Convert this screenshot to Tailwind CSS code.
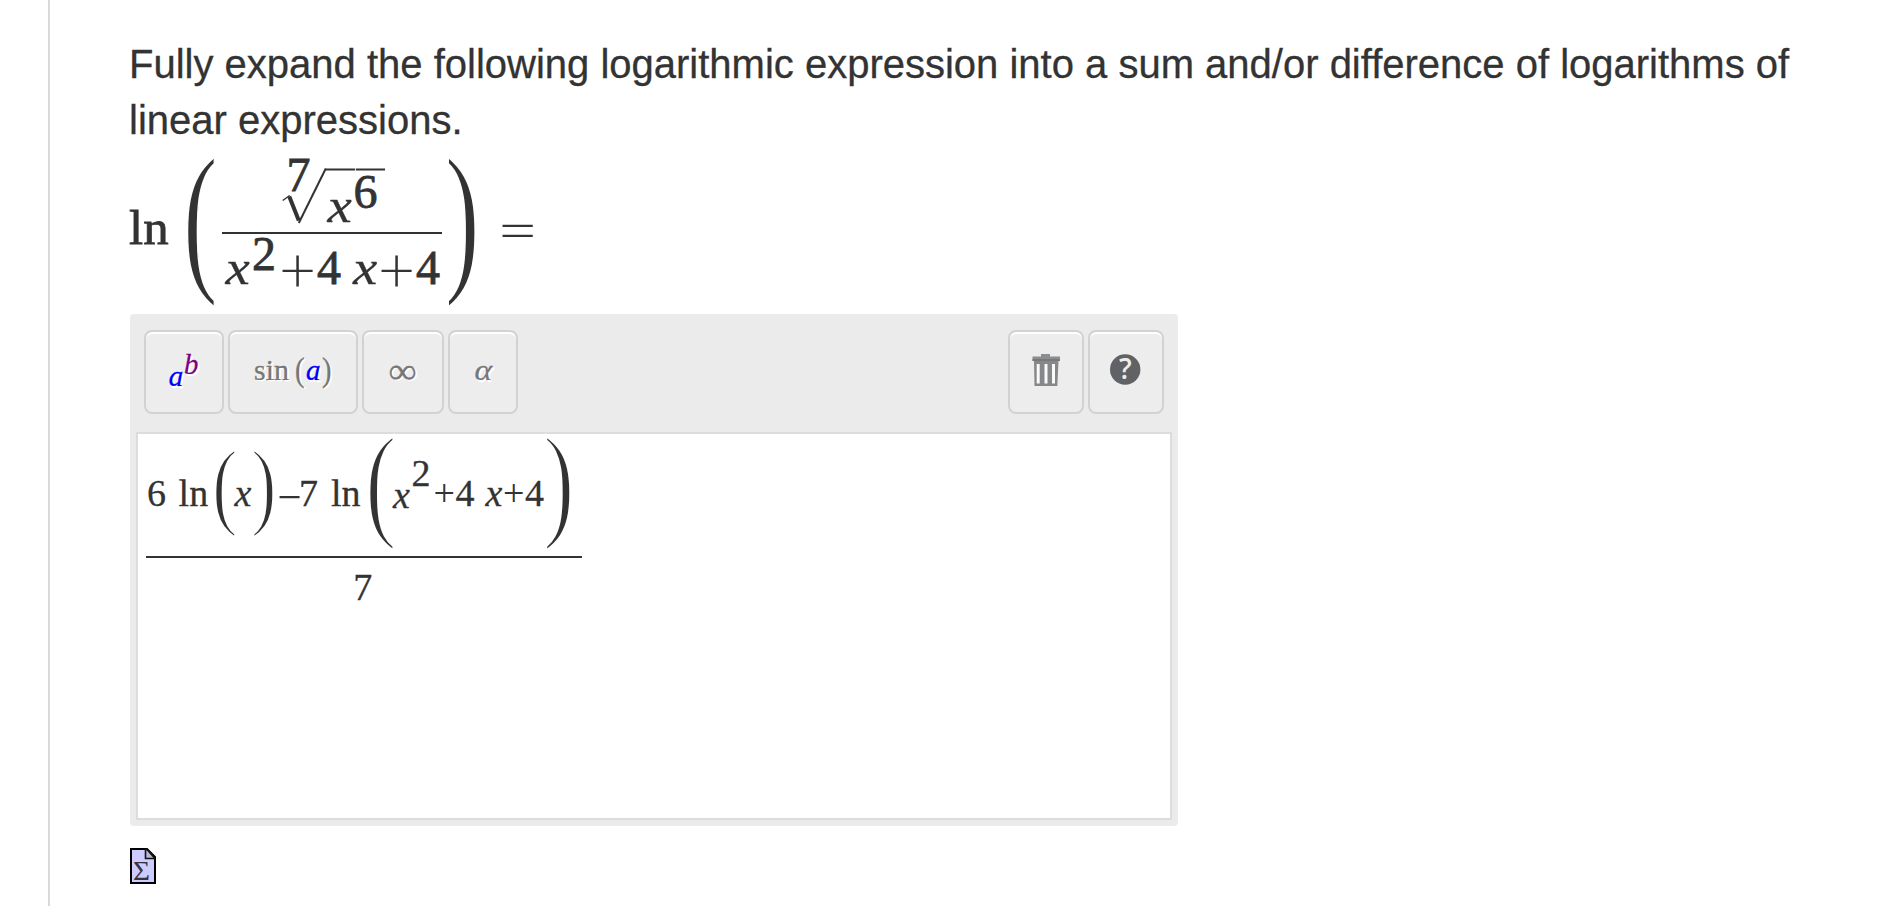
<!DOCTYPE html>
<html lang="en">
<head>
    <meta charset="UTF-8">
    <meta name="viewport" content="width=device-width, initial-scale=1.0">
    <title>Expand the Logarithm</title>
    <script src="https://cdn.jsdelivr.net/npm/@tailwindcss/browser@4"></script>
</head>
<body class="flex h-screen overflow-hidden bg-white font-['Liberation_Sans',sans-serif] text-[#333]">
    <aside class="w-[50px] shrink-0 border-r-2 border-[#d9d9d9]"></aside>
    <main class="flex flex-1 flex-col items-start pl-20 pt-9">
        <p class="-ml-px whitespace-nowrap text-[40px] leading-14 [-webkit-text-stroke:0.3px_#333]">Fully expand the following logarithmic expression into a sum and/or difference of logarithms of<br>linear expressions.</p>

        <!-- Question formula -->
        <svg class="h-[166px] w-[420px] overflow-visible font-['Liberation_Serif',serif]" viewBox="130 148 420 166" fill="#333" font-size="48">
            <g font-size="100" stroke="#fff" stroke-width="1.2">
                <text transform="translate(183 271.5) scale(1.04 1.65)">(</text>
                <text transform="translate(445 271.5) scale(1.04 1.65)">)</text>
            </g>
            <g stroke="#333" stroke-width="0.8">
                <text transform="translate(129 244) scale(1.06 1)">ln</text>
                <text x="286.5" y="190.5">7</text>
                <text x="353.5" y="208">6</text>
                <text x="252" y="270">2</text>
                <text x="317" y="284">4</text>
                <text x="416" y="284">4</text>
            </g>
            <g stroke="#333" stroke-width="0.3" font-style="italic">
                <text transform="translate(327.5 221.7) scale(1.14 1)">x</text>
                <text transform="translate(225.5 284) scale(1.14 1)">x</text>
                <text transform="translate(353 284) scale(1.14 1)">x</text>
            </g>
            <g font-family="Lato" font-weight="300" font-size="64">
                <text x="279" y="292">+</text>
                <text x="378" y="292">+</text>
                <text transform="translate(496.5 251.5) scale(1.14 1)">=</text>
            </g>
            <g fill="none" stroke="#333">
                <path d="M282.7 200.5l7-5" stroke-width="1.5"/>
                <path d="M289.3 196.5l9.5 24" stroke-width="4"/>
                <path d="M298.8 223l27-54.5" stroke-width="2"/>
                <path d="M325.5 169.5h29.7M356 169.5h29" stroke-width="2"/>
                <path d="M222 233h220" stroke-width="2"/>
            </g>
        </svg>

        <!-- Equation editor -->
        <section class="flex h-[512px] w-[1048px] flex-col rounded bg-[#ebebeb] px-1.5 pb-1.5">
            <div class="flex h-[118px] items-start justify-between px-2 pt-4 font-['Liberation_Serif',serif]">
                <div class="flex gap-1">
                    <button class="h-[84px] w-20 rounded-lg border-2 border-[#d2d2d2] bg-[#ededed] shadow-[inset_0_2px_0_#fff]">
                        <svg class="h-20 w-19 [paint-order:stroke] [text-shadow:1.5px_1.5px_0_#fff]" viewBox="146 332 76 80" font-size="29" font-style="italic" stroke-width="0.4">
                            <text x="168.7" y="386" fill="#00f" stroke="#00f">a</text>
                            <text x="184" y="374" fill="#800080" stroke="#800080">b</text>
                        </svg>
                    </button>
                    <button class="h-[84px] w-[130px] rounded-lg border-2 border-[#d2d2d2] bg-[#ededed] shadow-[inset_0_2px_0_#fff]">
                        <svg class="h-20 w-[126px] [paint-order:stroke] [text-shadow:1.5px_1.5px_0_#fff]" viewBox="230 332 126 80" font-size="29" fill="#777" stroke="#777" stroke-width="0.4">
                            <text transform="translate(254 380) scale(1.04 1)">sin</text>
                            <text transform="translate(295 380.5) scale(1 1.13)">(</text>
                            <text x="306" y="380" fill="#00f" stroke="#00f" font-style="italic">a</text>
                            <text transform="translate(322 380.5) scale(1 1.13)">)</text>
                        </svg>
                    </button>
                    <button class="h-[84px] w-[82px] rounded-lg border-2 border-[#d2d2d2] bg-[#ededed] shadow-[inset_0_2px_0_#fff]">
                        <svg class="h-20 w-[78px] [paint-order:stroke] [text-shadow:1.5px_1.5px_0_#fff]" viewBox="364 332 78 80" font-size="38" fill="#777" stroke="#777" stroke-width="0.5">
                            <text transform="translate(388.5 382.5) scale(1.04 .95)">∞</text>
                        </svg>
                    </button>
                    <button class="h-[84px] w-[70px] rounded-lg border-2 border-[#d2d2d2] bg-[#ededed] shadow-[inset_0_2px_0_#fff]">
                        <svg class="h-20 w-[66px] [paint-order:stroke] [text-shadow:1.5px_1.5px_0_#fff]" viewBox="450 332 66 80" font-size="30" font-style="italic" fill="#777" stroke="#777" stroke-width="0.3">
                            <text transform="translate(474.5 380.3) scale(1.12 1)">α</text>
                        </svg>
                    </button>
                </div>
                <div class="flex gap-1">
                    <button class="h-[84px] w-[76px] rounded-lg border-2 border-[#d2d2d2] bg-[#ededed] shadow-[inset_0_2px_0_#fff]">
                        <svg class="h-20 w-18" viewBox="1010 332 72 80">
                            <path fill="#8b8d8f" d="M1041 354h9v2.5h-9zM1032.5 356.5h27.5v4.5h-27.5z"/>
                            <path fill="#77797b" d="M1032.5 359h27.5v2h-27.5z"/>
                            <path fill="#85878a" d="M1034 361h24.5l-1.2 25h-22.8z"/>
                            <path stroke="#fafafa" stroke-width="3" d="M1038.2 364v19.5M1046 364v19.5M1053.5 364v19.5"/>
                        </svg>
                    </button>
                    <button class="h-[84px] w-[76px] rounded-lg border-2 border-[#d2d2d2] bg-[#ededed] shadow-[inset_0_2px_0_#fff]">
                        <svg class="h-20 w-18" viewBox="1090 332 72 80">
                            <circle cx="1125.2" cy="369.5" r="15.2" fill="#606266"/>
                            <text x="1125.4" y="379" text-anchor="middle" font-family="Open Sans" font-weight="600" font-size="28" fill="#ededed">?</text>
                        </svg>
                    </button>
                </div>
            </div>
            <div class="flex-1 border-2 border-[#dcdcdc] bg-white">
                <svg class="h-[190px] w-[470px] overflow-visible font-['Liberation_Serif',serif]" viewBox="138 434 470 190" font-size="38" fill="#333">
                    <g font-size="100" stroke="#fff" stroke-width="2.4">
                        <text transform="translate(212 516.7) scale(.77 .965)">(</text>
                        <text transform="translate(251 516.7) scale(.77 .965)">)</text>
                        <text transform="translate(365 524.3) scale(.95 1.28)">(</text>
                        <text transform="translate(543 524.3) scale(.95 1.28)">)</text>
                    </g>
                    <g stroke="#333" stroke-width="0.3">
                        <text x="147" y="505.5">6</text>
                        <text x="178.6" y="505.5">ln</text>
                        <text x="234.5" y="505.5" font-style="italic">x</text>
                        <text x="280" y="505.5">–</text>
                        <text x="299" y="505.5">7</text>
                        <text x="331" y="505.5">ln</text>
                        <text x="393" y="507.5" font-style="italic">x</text>
                        <text x="411.5" y="486">2</text>
                        <text x="455.5" y="505.5">4</text>
                        <text x="485.5" y="505.5" font-style="italic">x</text>
                        <text x="525" y="505.5">4</text>
                        <text x="353.2" y="600">7</text>
                    </g>
                    <text x="433.5" y="505.5">+</text>
                    <text x="503" y="505.5">+</text>
                    <path d="M146 556h436v2h-436z"/>
                </svg>
            </div>
        </section>

        <!-- Sigma document icon -->
        <svg class="mt-[22px] h-9 w-[26px] font-['Liberation_Serif',serif]" viewBox="0 0 26 36">
            <path fill="#ccccff" stroke="#000" stroke-width="2" d="M1 1h16l8 8v26h-24z"/>
            <path fill="#b4b4d4" stroke="#111" stroke-width="1.6" d="M15.5 1v9.5h9.5l-8-9z"/>
            <text x="3" y="31.5" font-size="28" textLength="17" lengthAdjust="spacingAndGlyphs" fill="#333344">Σ</text>
        </svg>
    </main>
</body>
</html>
